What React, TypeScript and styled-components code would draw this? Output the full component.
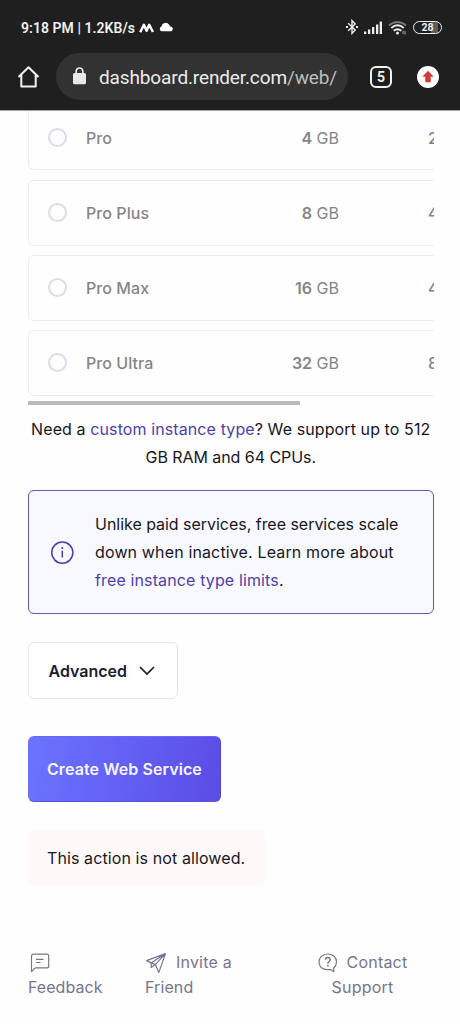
import React from 'react';
import styled, { createGlobalStyle } from 'styled-components';

const GlobalStyle = createGlobalStyle`
  * { box-sizing: border-box; }
  body {
    margin: 0;
    background: #fff;
    color: #17171c;
    font-family: Inter, "Liberation Sans", sans-serif;
    font-size: 16px;
  }
`;

const Screen = styled.div`
  width: 460px;
  height: 1024px;
  overflow: hidden;
  background: #fefefe;
`;

const BrowserChrome = styled.header`
  height: 111px;
  background: #1f1f1f;
  border-bottom: 1px solid #a5a5a5;
  color: #f1f1f1;
  font-family: Roboto, "Liberation Sans", sans-serif;
`;

const StatusBar = styled.div`
  display: flex;
  align-items: center;
  height: 53px;
  padding: 3px 18px 0 21px;
`;

const Clock = styled.span`
  width: 114px;
  font-size: 14px;
  font-weight: 600;
  letter-spacing: 0.05px;
  white-space: nowrap;
`;

const StatusLeft = styled.div`
  display: flex;
  align-items: center;
  flex: 1;
  gap: 4px;
`;

const Glyph = styled.span<{ $after?: number; $lift?: number }>`
  display: flex;
  margin-right: ${(p) => p.$after ?? 0}px;
  padding-bottom: ${(p) => p.$lift ?? 0}px;
`;

const StatusRight = styled.div`
  display: flex;
  align-items: center;
`;

const AddressRow = styled.div`
  display: flex;
  align-items: center;
  height: 47px;
  padding-left: 17px;
`;

const AddressBar = styled.div`
  display: flex;
  align-items: center;
  width: 292px;
  height: 47px;
  margin: 0 22px 0 16px;
  padding-left: 17px;
  border-radius: 24px;
  background: #323232;
`;

const Url = styled.span`
  margin-left: 13px;
  padding-top: 1px;
  font-size: 19px;
  letter-spacing: -0.13px;
  white-space: nowrap;
  color: #ececec;
`;

const UrlPath = styled.span`
  color: #bdbdbd;
`;

const TabCount = styled.div`
  display: grid;
  place-items: center;
  width: 22px;
  height: 22px;
  margin-right: 25px;
  border: 2px solid #f1f1f1;
  border-radius: 6px;
  font-size: 14px;
  font-weight: 700;
  line-height: 18px;
`;

const Content = styled.main`
  padding: 0 26.5px 0 28px;
`;

const InstanceTable = styled.div`
  overflow: hidden;
  width: 405.5px;
  height: 285px;
`;

const InstanceRow = styled.div<{ $cut?: boolean }>`
  display: grid;
  grid-template-columns: 38px 130px 123px 90px 120px;
  align-items: center;
  width: 560px;
  height: ${(p) => (p.$cut ? 59 : 65.5)}px;
  margin-bottom: ${(p) => (p.$cut ? 10 : 9.5)}px;
  padding-left: 19px;
  border: 1px solid #ededf0;
  border-radius: ${(p) => (p.$cut ? '0 0 6px 6px' : '6px')};
  border-top-width: ${(p) => (p.$cut ? 0 : 1)}px;
  padding-bottom: ${(p) => (p.$cut ? 5 : 0)}px;
  color: #858585;
`;

const Radio = styled.span`
  width: 19px;
  height: 19px;
  border: 2px solid #dadeea;
  border-radius: 50%;
`;

const PlanName = styled.span`
  font-weight: 550;
  font-size: 16px;
  letter-spacing: 0.07px;
`;

const Memory = styled.span`
  text-align: right;
  font-size: 16px;
  b { font-weight: 600; }
`;

const Cpu = styled.span`
  padding-left: 89px;
  font-weight: 500;
  width: 200px;
`;

const Scrollbar = styled.div`
  width: 272px;
  height: 4px;
  margin-top: 5px;
  background: #bababa;
`;

const Line = styled.span<{ $spacing?: number }>`
  display: block;
  white-space: nowrap;
  letter-spacing: ${(p) => p.$spacing ?? 0}px;
`;

const Link = styled.a`
  color: #4f41a9;
`;

const SupportNote = styled.p`
  margin: 10px 0 0;
  line-height: 28px;
  display: flex;
  flex-direction: column;
  align-items: center;
`;

const InfoBox = styled.section`
  display: flex;
  align-items: center;
  height: 124px;
  margin-top: 19px;
  padding-left: 22px;
  border: 1px solid #6558a8;
  border-radius: 6px;
  background: #f8f9fe;
  line-height: 28px;
`;

const InfoText = styled.div`
  margin-left: 21px;
`;

const AdvancedButton = styled.button`
  display: flex;
  align-items: center;
  gap: 12px;
  width: 150px;
  height: 57px;
  margin-top: 28px;
  padding: 0 0 0 19.5px;
  border: 1px solid #e3e6ea;
  border-radius: 6px;
  background: #fff;
  color: #1d1a31;
  font: 600 16px Inter, sans-serif;
`;

const CreateButton = styled.button`
  display: block;
  width: 193px;
  height: 66px;
  margin-top: 37px;
  padding: 0 0 0 18px;
  border: 1px solid;
  border-color: #6a68f0 #5347d0 #5a50d8 #6a70fa;
  border-radius: 6px;
  background: linear-gradient(100deg, #6b74ff, #5b4ce6);
  color: #f5f5ff;
  font: 600 16px Inter, sans-serif;
  letter-spacing: 0.08px;
  text-align: left;
`;

const ErrorMessage = styled.div`
  width: 237px;
  height: 56px;
  margin-top: 28px;
  padding-left: 19px;
  border-radius: 6px;
  background: #fef8f8;
  line-height: 56px;
  letter-spacing: 0.1px;
`;

const Footer = styled.footer`
  display: grid;
  grid-template-columns: 117px 172px 91px;
  margin-top: 64px;
  color: #77758d;
  line-height: 25px;
`;

const FooterLink = styled.a<{ $center?: boolean }>`
  display: flex;
  flex-direction: column;
  align-items: ${(p) => (p.$center ? 'center' : 'flex-start')};
`;

const FooterTop = styled.span`
  display: flex;
  align-items: center;
  gap: 9px;
  height: 25px;
  letter-spacing: 0.2px;
  white-space: nowrap;
`;

const plans = [
  { name: 'Pro', memory: '4', cpu: '2' },
  { name: 'Pro Plus', memory: '8', cpu: '4' },
  { name: 'Pro Max', memory: '16', cpu: '4' },
  { name: 'Pro Ultra', memory: '32', cpu: '8' },
];

const Motorola = () => (
  <svg width="15" height="12" viewBox="0 0 15 12" fill="none" stroke="#fff" strokeWidth="2.5" strokeLinejoin="round">
    <path d="M1.2 10.2 4.9 2.8l2.7 6 2.6-6 3.7 7.2" />
  </svg>
);

const Cloud = () => (
  <svg width="15" height="10" viewBox="0 0 15 10" fill="#fff">
    <path d="M2.6 9.2A2.4 2.4 0 0 1 2.4 4.6 4.2 4.2 0 0 1 10 2.6l1.2 1.8A2.5 2.5 0 0 1 12.3 9.2Z" />
  </svg>
);

const Bluetooth = () => (
  <svg width="14" height="16" viewBox="0 0 14 16" fill="none" stroke="#eee" strokeWidth="1.4">
    <path d="M3.2 4.3 10.2 11 7 14.4V1.6L10.2 5 3.2 11.7" />
    <path d="M1 8h2M11 8h2" strokeWidth="1.8" />
  </svg>
);

const Signal = () => (
  <svg width="18" height="13" viewBox="0 0 18 13" fill="#eee">
    <path d="M0 10.5h2.3V13H0zM4 8.5h2.3V13H4zM8 6h2.3v7H8zM12 3.5h2.3V13H12zM15.7 0.5H18V13h-2.3z" />
  </svg>
);

const Wifi = () => (
  <svg width="19" height="16" viewBox="0 0 19 16" fill="none" strokeWidth="1.9">
    <path d="M1 5.5Q9.5-1.5 18 5.5" stroke="#777" />
    <path d="M3.3 8Q9.5 2.5 15.7 8M5.7 10.8q3.8-3.3 7.6 0" stroke="#eee" />
    <circle cx="9.5" cy="12.9" r="1.5" fill="#eee" />
    <path d="M15 14v-3.3M17 10.9v3.6" stroke="#aaa" strokeWidth="1" />
  </svg>
);

const Battery = styled.span`
  display: grid;
  place-items: center;
  width: 29px;
  height: 13px;
  border: 1.5px solid #eee;
  border-radius: 7px;
  background: linear-gradient(90deg, #1f1f1f 62%, #5c5c5c 62%, #5c5c5c 90%, #1f1f1f 90%);
  font-size: 10.5px;
  font-weight: 700;
  line-height: 10px;
`;

const Home = () => (
  <svg width="23" height="24" viewBox="0 0 23 24" fill="none" stroke="#f1f1f1" strokeWidth="2" strokeLinejoin="round">
    <path d="M1.5 12 11.5 2.2 21.5 12M4.3 9.7V21.5h14.4V9.7" />
  </svg>
);

const Lock = () => (
  <svg width="13" height="18" viewBox="0 0 13 18">
    <rect x="0" y="6" width="13" height="11.3" rx="1.5" fill="#e8e8e8" />
    <path d="M3.2 7V4.3a3.3 3.3 0 0 1 6.6 0V7" fill="none" stroke="#e8e8e8" strokeWidth="1.7" />
  </svg>
);

const UpdateBadge = () => (
  <svg width="22" height="22" viewBox="0 0 22 22">
    <circle cx="11" cy="11" r="11" fill="#fff" />
    <path d="M11 4.8 16.7 10.8H13.7V16.3H8.3V10.8H5.3Z" fill="#d33a31" />
  </svg>
);

const InfoIcon = () => (
  <svg width="23" height="24" viewBox="0 0 23 24" fill="none" stroke="#4b3db0" strokeWidth="1.5">
    <circle cx="11.3" cy="12.6" r="10.6" />
    <path d="M11.3 10.7v6.8" />
    <circle cx="11.3" cy="8" r="1" fill="#4b3db0" stroke="none" />
  </svg>
);

const Chevron = () => (
  <svg width="16" height="10" viewBox="0 0 16 10" fill="none" stroke="#1d1a31" strokeWidth="1.7">
    <path d="M1 1 8 8 15 1" />
  </svg>
);

const FeedbackIcon = () => (
  <svg width="23" height="22" viewBox="0 0 23 22" fill="none" stroke="#77758d" strokeWidth="1.2" strokeLinejoin="round">
    <path d="M3.5 19.6V4.1Q3.5 2.1 5.5 2.1H18.7Q20.7 2.1 20.7 4.1V13.9Q20.7 15.9 18.7 15.9H7.2Z" />
    <path d="M8 7.4h7.6M8 10.5h4.6" />
  </svg>
);

const SendIcon = () => (
  <svg width="22" height="22" viewBox="0 0 22 22" fill="none" stroke="#77758d" strokeWidth="1.2" strokeLinejoin="round">
    <path d="M1.5 8.6 20.5 1.6 13.9 20.4 10.3 12.6ZM20.5 1.6 6.2 11V15.6L10.3 12.6Z" />
  </svg>
);

const HelpIcon = () => (
  <svg width="20" height="21" viewBox="0 0 20 21" fill="none" stroke="#77758d" strokeWidth="1.2" strokeLinejoin="round">
    <path d="M13.2 17.6H9.4C4.2 17.6 1 14.4 1 10S4.5 2 9.7 2 18.5 5.5 18.5 10C18.5 12.5 17.5 14.5 15.7 16V19.7Z" />
    <path d="M7.4 7.8C7.5 6.2 8.5 5.5 9.8 5.5s2.4.8 2.4 2.2c0 1.7-2.3 1.8-2.3 4" strokeWidth="1.4" />
    <circle cx="9.9" cy="13.7" r=".9" fill="#77758d" stroke="none" />
  </svg>
);

export default function App() {
  return (
    <Screen>
      <GlobalStyle />
      <BrowserChrome>
        <StatusBar>
          <StatusLeft>
            <Clock>9:18 PM | 1.2KB/s</Clock>
            <Glyph $after={1} $lift={1}><Motorola /></Glyph>
            <Glyph $lift={2}><Cloud /></Glyph>
          </StatusLeft>
          <StatusRight>
            <Glyph $after={5} $lift={2}><Bluetooth /></Glyph>
            <Glyph $after={6} $lift={1}><Signal /></Glyph>
            <Glyph $after={6} $lift={1}><Wifi /></Glyph>
            <Glyph $lift={1}><Battery>28</Battery></Glyph>
          </StatusRight>
        </StatusBar>
        <AddressRow>
          <Home />
          <AddressBar>
            <Glyph $lift={1}><Lock /></Glyph>
            <Url>dashboard.render.com<UrlPath>/web/</UrlPath></Url>
          </AddressBar>
          <TabCount>5</TabCount>
          <UpdateBadge />
        </AddressRow>
      </BrowserChrome>
      <Content>
        <InstanceTable>
          {plans.map((plan, i) => (
            <InstanceRow key={plan.name} $cut={i === 0}>
              <Radio />
              <PlanName>{plan.name}</PlanName>
              <Memory><b>{plan.memory}</b> GB</Memory>
              <Cpu>{plan.cpu}</Cpu>
            </InstanceRow>
          ))}
        </InstanceTable>
        <Scrollbar />
        <SupportNote>
          <Line $spacing={0.1}>Need a <Link>custom instance type</Link>? We support up to 512</Line>
          <Line $spacing={-0.06}>GB RAM and 64 CPUs.</Line>
        </SupportNote>
        <InfoBox>
          <InfoIcon />
          <InfoText>
            <Line $spacing={-0.03}>Unlike paid services, free services scale</Line>
            <Line $spacing={0.14}>down when inactive. Learn more about</Line>
            <Line $spacing={0.13}><Link>free instance type limits</Link>.</Line>
          </InfoText>
        </InfoBox>
        <AdvancedButton>Advanced <Chevron /></AdvancedButton>
        <CreateButton>Create Web Service</CreateButton>
        <ErrorMessage>This action is not allowed.</ErrorMessage>
        <Footer>
          <FooterLink>
            <FooterTop><FeedbackIcon /></FooterTop>
            <Line $spacing={0.05}>Feedback</Line>
          </FooterLink>
          <FooterLink>
            <FooterTop><SendIcon />Invite a</FooterTop>
            <Line $spacing={0.1}>Friend</Line>
          </FooterLink>
          <FooterLink $center>
            <FooterTop><HelpIcon />Contact</FooterTop>
            <Line $spacing={0.25}>Support</Line>
          </FooterLink>
        </Footer>
      </Content>
    </Screen>
  );
}
